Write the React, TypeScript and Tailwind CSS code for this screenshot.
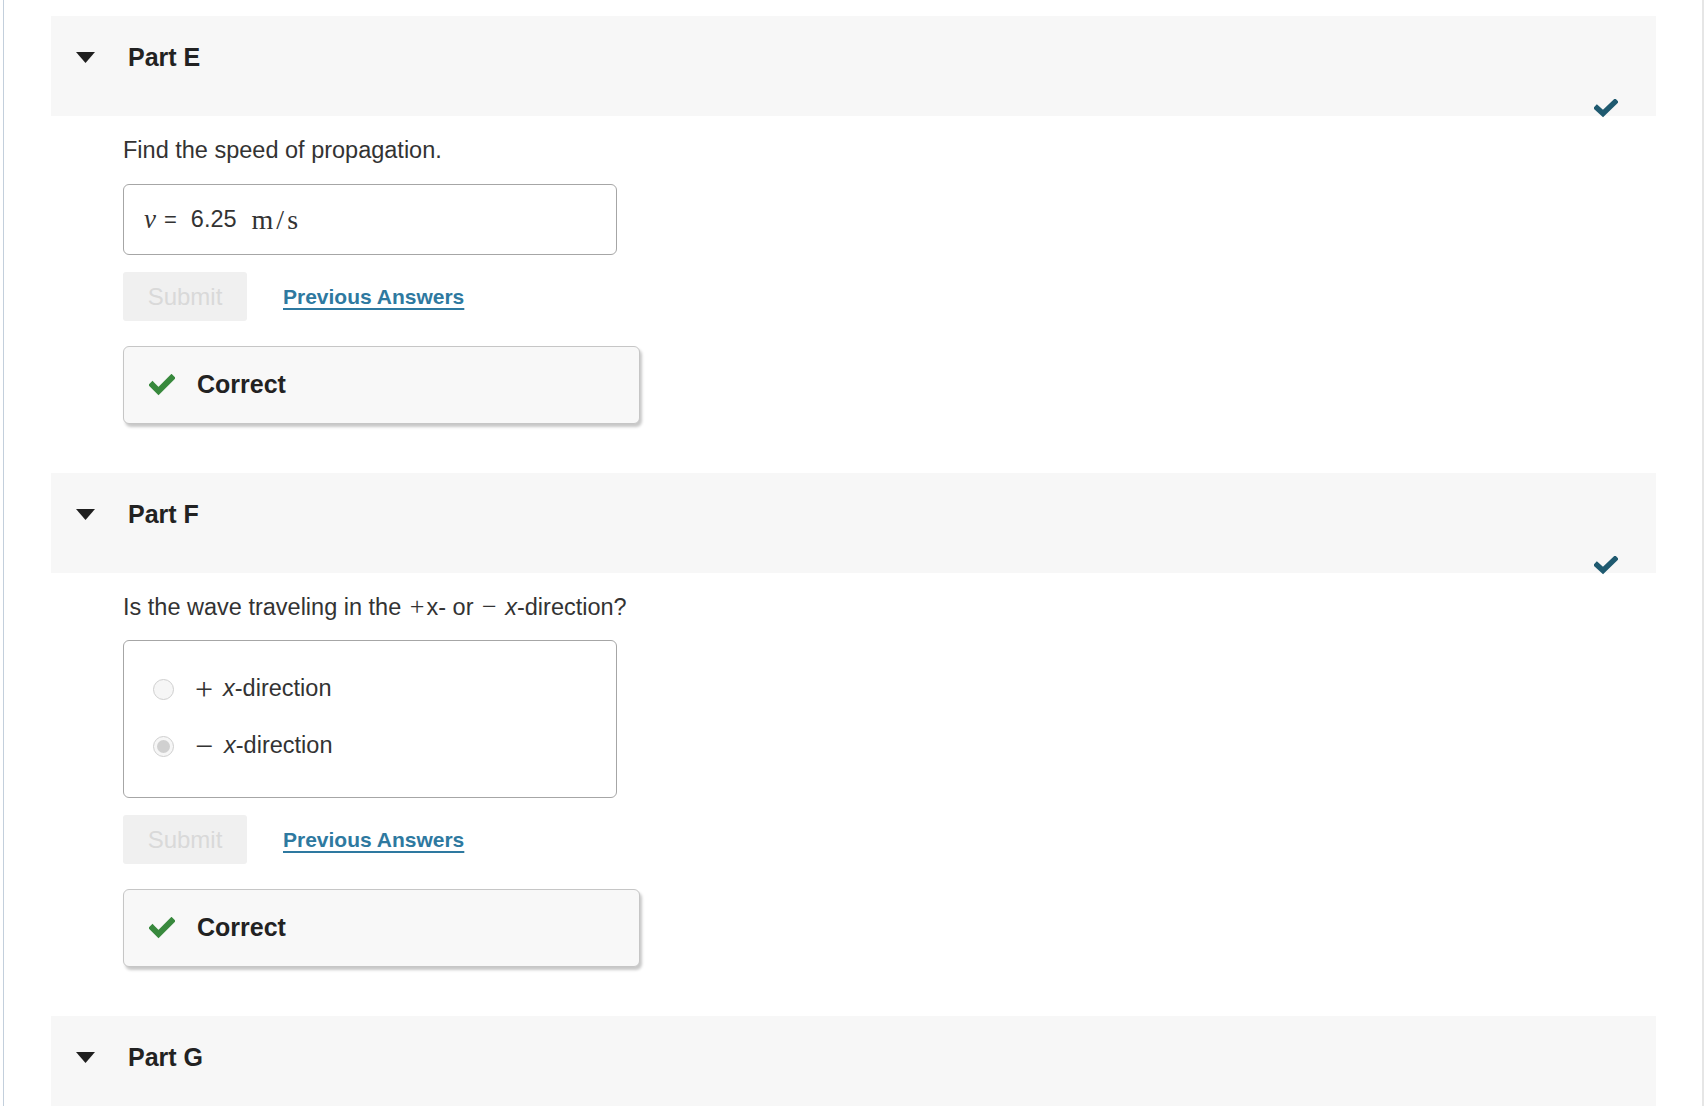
import React from "react";

const font = { fontFamily: '"Liberation Sans", Arial, Helvetica, sans-serif' };
const mathSerif = { fontFamily: '"Liberation Serif", "Times New Roman", serif' };

const Caret = () => (
  <svg width="19" height="11" viewBox="0 0 19 11" className="shrink-0">
    <path d="M0 0 L19 0 L9.5 11 Z" fill="#1f1f1f" />
  </svg>
);

const DoneMark = () => (
  <svg width="24" height="19" viewBox="0 0 24 19" className="absolute right-[38px] top-[83px]">
    <path
      d="M3 9 L9 14.5 L21 3"
      fill="none"
      stroke="#1f5a70"
      strokeWidth="5.4"
      strokeLinecap="square"
      strokeLinejoin="miter"
    />
  </svg>
);

const GreenCheck = () => (
  <svg width="26" height="22" viewBox="0 0 26 22" className="shrink-0">
    <path
      d="M3.5 11 L9.5 17 L22.5 4"
      fill="none"
      stroke="#38893d"
      strokeWidth="6"
      strokeLinecap="square"
    />
  </svg>
);

type HeaderProps = { title: string; done?: boolean };

const PartHeader = ({ title, done }: HeaderProps) => (
  <div className="relative h-[100px] bg-[#f7f7f7]">
    <div className="flex items-center pl-[25px] pt-[25px] h-[57px]">
      <Caret />
      <span className="ml-[33px] text-[25px] leading-[32px] font-bold text-[#222]">
        {title}
      </span>
    </div>
    {done && <DoneMark />}
  </div>
);

const SubmitRow = () => (
  <div className="mt-[17px] flex items-center">
    <button
      type="button"
      disabled
      className="w-[124px] h-[49px] rounded-[3px] bg-[#f0f0f0] text-[24px] text-[#d9d9d9]"
    >
      Submit
    </button>
    <a
      href="#"
      className="ml-[36px] text-[21px] font-bold text-[#2e79a0] underline decoration-2 underline-offset-[4px]"
    >
      Previous Answers
    </a>
  </div>
);

const CorrectBox = () => (
  <div className="mt-[25px] w-[517px] h-[78px] flex items-center rounded-[6px] border border-[#c6c6c6] bg-[#f8f8f8] shadow-[2px_3px_3px_rgba(0,0,0,0.22)] pl-[25px]">
    <GreenCheck />
    <span className="ml-[22px] text-[25px] font-bold text-[#222]">Correct</span>
  </div>
);

const Radio = ({ checked }: { checked?: boolean }) => (
  <span className="shrink-0 w-[21px] h-[21px] rounded-full border border-[#cfcfcf] bg-[#f6f6f6] flex items-center justify-center">
    {checked && <span className="w-[13px] h-[13px] rounded-full bg-[#d0d0d0]" />}
  </span>
);

export default function App() {
  return (
    <div className="min-h-[1106px] bg-white" style={font}>
      <div className="ml-[3px] min-h-[1106px] border-l border-[#c3cfdc] border-r-2 border-r-[#e6e6e6] pl-[47px] pr-[46px] pt-[16px]">
        {/* Part E */}
        <PartHeader title="Part E" done />
        <div className="pl-[72px] pb-[49px]">
          <p className="mt-[18px] text-[23.5px] leading-[32px] text-[#333]">
            Find the speed of propagation.
          </p>
          <div className="mt-[18px] w-[494px] h-[71px] rounded-[6px] border border-[#a6a6a6] flex items-center pl-[20px] text-[#333]">
            <span className="italic text-[27px]" style={mathSerif}>
              v
            </span>
            <span className="ml-[8px] text-[22px]">=</span>
            <span className="ml-[14px] text-[23.5px]">6.25</span>
            <span className="ml-[15px] text-[28px] tracking-[3px]" style={mathSerif}>
              m/s
            </span>
          </div>
          <SubmitRow />
          <CorrectBox />
        </div>

        {/* Part F */}
        <PartHeader title="Part F" done />
        <div className="pl-[72px] pb-[49px]">
          <p className="mt-[18px] h-[32px] text-[23.5px] leading-[32px] text-[#333]">
            Is the wave traveling in the{" "}
            <span className="px-[2px] text-[26px] leading-[0]" style={mathSerif}>+</span>x- or{" "}
            <span className="px-[2px] text-[26px] leading-[0]" style={mathSerif}>−</span>{" "}
            <span className="italic">x</span>-direction?
          </p>
          <div className="mt-[17px] w-[494px] h-[158px] rounded-[6px] border border-[#a6a6a6] pl-[29px] pt-[37px] flex flex-col gap-[35px] text-[23.5px] text-[#333]">
            <label className="flex items-center h-[22px]">
              <Radio />
              <span className="ml-[21px] text-[32px] leading-none" style={mathSerif}>+</span>
              <span className="ml-[10px]">
                <span className="italic">x</span>-direction
              </span>
            </label>
            <label className="flex items-center h-[22px]">
              <Radio checked />
              <span className="ml-[21px] text-[32px] leading-none" style={mathSerif}>−</span>
              <span className="ml-[11px]">
                <span className="italic">x</span>-direction
              </span>
            </label>
          </div>
          <SubmitRow />
          <CorrectBox />
        </div>

        {/* Part G */}
        <PartHeader title="Part G" />
      </div>
    </div>
  );
}
